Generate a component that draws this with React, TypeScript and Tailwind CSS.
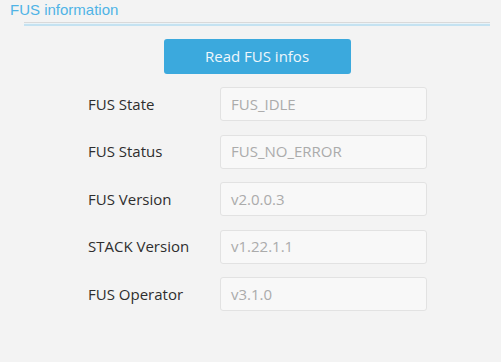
const rows = [
  { label: "FUS State", value: "FUS_IDLE" },
  { label: "FUS Status", value: "FUS_NO_ERROR" },
  { label: "FUS Version", value: "v2.0.0.3" },
  { label: "STACK Version", value: "v1.22.1.1" },
  { label: "FUS Operator", value: "v3.1.0" },
];

export default function App() {
  return (
    <div className="w-[501px] h-[362px] bg-[#f3f3f3] overflow-hidden font-['Open_Sans',sans-serif]">
      <div className="pt-[1px] pl-[10px] text-[15px] leading-[17px] text-[#4fb3e6] font-['Liberation_Sans',Arial,sans-serif]">
        FUS information
      </div>

      <div className="ml-[24px] mr-[11px] mt-[4px]">
        <div className="h-[1px] bg-[#d9d9d9]" />
        <div className="h-[1px] bg-[#e9f3f8]" />
        <div className="h-[2px] bg-[#c4e2f1]" />

        <div className="flex justify-center mt-[13px]">
          <button className="w-[187px] h-[35px] rounded-[3px] bg-[#3ba9dd] text-[15px] text-[#eef7fc]">
            Read FUS infos
          </button>
        </div>
      </div>

      <div className="mt-[13px] pl-[88px] flex flex-col gap-[13.5px]">
        {rows.map((row) => (
          <div key={row.label} className="flex items-center">
            <div className="w-[132px] text-[15px] text-[#2e2e2e]">{row.label}</div>
            <div className="w-[207px] h-[34px] flex items-center px-[10px] bg-[#f8f8f8] border border-[#e2e2e2] rounded-[3px] text-[15px] text-[#ababab]">
              {row.value}
            </div>
          </div>
        ))}
      </div>
    </div>
  );
}
